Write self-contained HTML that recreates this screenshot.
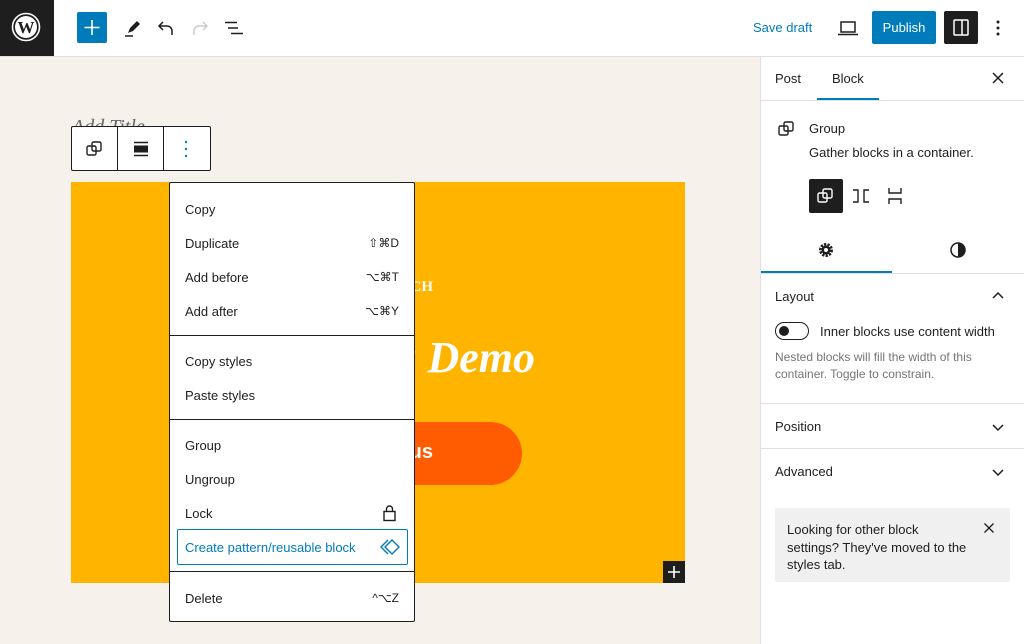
<!DOCTYPE html>
<html><head><meta charset="utf-8"><style>
*{box-sizing:border-box;margin:0;padding:0}
body{width:1024px;height:644px;overflow:hidden;font-family:"Liberation Sans",sans-serif;font-size:13px;color:#1e1e1e;background:#f6f1eb;position:relative}
.a{position:absolute}
svg{display:block}
.mi{position:absolute;left:15px;font-size:13px;color:#1e1e1e}
.sc{position:absolute;right:15px;font-size:12px;color:#1e1e1e}
</style></head><body>
<!-- top bar -->
<div class="a" style="left:0;top:0;width:1024px;height:57px;background:#fff;border-bottom:1px solid #e0e0e0"></div>
<div class="a" style="left:0;top:0;width:54px;height:56px;background:#1e1e1e">
<svg width="54" height="56" viewBox="0 0 54 56"><circle cx="26" cy="27" r="13.5" fill="none" stroke="#fff" stroke-width="1.6"/><circle cx="26" cy="27" r="11" fill="#fff"/><text x="26" y="33" text-anchor="middle" font-family="Liberation Serif" font-weight="bold" font-size="17" fill="#1e1e1e">W</text></svg></div>
<div class="a" style="left:77px;top:12px;width:30px;height:31px;background:#007cba;border-radius:2px"><svg width="30" height="31"><path d="M15 8v15M7.5 15.5h15" stroke="#fff" stroke-width="1.6"/></svg></div>
<svg class="a" style="left:120px;top:16px" width="24" height="24"><path d="M8 17l2-5 7-7 3 3-7 7z" fill="#1e1e1e"/><path d="M5 20h8" stroke="#1e1e1e" stroke-width="1.5"/></svg>
<svg class="a" style="left:154px;top:16px" width="24" height="24"><path d="M18 19v-4a5 5 0 0 0-5-5H6M9 6l-4 4 4 4" fill="none" stroke="#1e1e1e" stroke-width="1.5"/></svg>
<svg class="a" style="left:188px;top:16px" width="24" height="24"><path d="M6 19v-4a5 5 0 0 1 5-5h7M15 6l4 4-4 4" fill="none" stroke="#ccc" stroke-width="1.5"/></svg>
<svg class="a" style="left:222px;top:16px" width="24" height="24"><path d="M3 6.5h12M6 12h10M9 17.5h12" stroke="#1e1e1e" stroke-width="1.5"/></svg>
<div class="a" style="left:753px;top:20px;color:#007cba;font-size:13px">Save draft</div>
<svg class="a" style="left:836px;top:16px" width="24" height="24"><rect x="5" y="6" width="14" height="10" fill="none" stroke="#1e1e1e" stroke-width="1.5"/><path d="M2 18.5h20" stroke="#1e1e1e" stroke-width="1.5"/></svg>
<div class="a" style="left:872px;top:11px;width:64px;height:33px;background:#007cba;color:#fff;border-radius:2px;text-align:center;line-height:33px">Publish</div>
<div class="a" style="left:944px;top:11px;width:34px;height:33px;background:#1e1e1e;border-radius:2px"><svg width="34" height="33"><rect x="10" y="9" width="14" height="15" rx="1" fill="none" stroke="#fff" stroke-width="1.5"/><path d="M18 9v15" stroke="#fff" stroke-width="1.5"/></svg></div>
<svg class="a" style="left:988px;top:16px" width="20" height="24"><circle cx="10" cy="6" r="1.5" fill="#1e1e1e"/><circle cx="10" cy="12" r="1.5" fill="#1e1e1e"/><circle cx="10" cy="18" r="1.5" fill="#1e1e1e"/></svg>

<!-- canvas -->
<div class="a" style="left:72px;top:116px;font-family:'Liberation Serif';font-style:italic;font-size:20px;color:#666">Add Title</div>
<div class="a" style="left:71px;top:182px;width:614px;height:401px;background:#ffb500"></div>
<div class="a" style="right:591px;top:279px;color:#fff;font-family:'Liberation Serif';font-weight:bold;font-size:15px;white-space:nowrap">ARCH</div>
<div class="a" style="left:330px;top:422px;width:192px;height:63px;background:#ff5b00;border-radius:32px"></div>
<div class="a" style="right:591px;top:441px;color:#fff;font-weight:bold;font-size:20px">us</div>
<div class="a" style="right:489px;top:332px;color:#fff;font-family:'Liberation Serif';font-style:italic;font-weight:bold;font-size:44px;white-space:nowrap">a Demo</div>
<div class="a" style="left:663px;top:561px;width:22px;height:22px;background:#1e1e1e"><svg width="22" height="22"><path d="M11 5v12M5 11h12" stroke="#fff" stroke-width="1.6"/></svg></div>

<!-- block toolbar -->
<div class="a" style="left:71px;top:126px;width:140px;height:45px;background:#fff;border:1px solid #1e1e1e;border-radius:2px"></div>
<div class="a" style="left:117px;top:127px;width:1px;height:43px;background:#1e1e1e"></div>
<div class="a" style="left:163px;top:127px;width:1px;height:43px;background:#1e1e1e"></div>
<svg class="a" style="left:84px;top:138px" width="22" height="22"><rect x="3" y="8" width="9" height="9" rx="1.5" fill="none" stroke="#1e1e1e" stroke-width="1.4"/><rect x="8" y="4" width="9" height="9" rx="1.5" fill="none" stroke="#1e1e1e" stroke-width="1.4"/></svg>
<svg class="a" style="left:130px;top:138px" width="22" height="22"><path d="M4 4.5h14M4 17.5h14" stroke="#1e1e1e" stroke-width="1.5"/><rect x="4" y="7.5" width="14" height="7" fill="#1e1e1e"/></svg>
<svg class="a" style="left:176px;top:138px" width="20" height="22"><circle cx="10" cy="4" r="1.2" fill="#007cba"/><circle cx="10" cy="11" r="1.2" fill="#007cba"/><circle cx="10" cy="18" r="1.2" fill="#007cba"/></svg>

<!-- menu -->
<div class="a" style="left:169px;top:182px;width:246px;height:440px;background:#fff;border:1px solid #1e1e1e;border-radius:2px">
<div class="mi" style="top:19px">Copy</div>
<div class="mi" style="top:53px">Duplicate</div><div class="sc" style="top:53px">⇧⌘D</div>
<div class="mi" style="top:87px">Add before</div><div class="sc" style="top:87px">⌥⌘T</div>
<div class="mi" style="top:121px">Add after</div><div class="sc" style="top:121px">⌥⌘Y</div>
<div class="a" style="left:0;top:152px;width:244px;height:1px;background:#1e1e1e"></div>
<div class="mi" style="top:171px">Copy styles</div>
<div class="mi" style="top:205px">Paste styles</div>
<div class="a" style="left:0;top:236px;width:244px;height:1px;background:#1e1e1e"></div>
<div class="mi" style="top:255px">Group</div>
<div class="mi" style="top:289px">Ungroup</div>
<div class="mi" style="top:323px">Lock</div>
<svg class="a" style="left:210px;top:320px" width="20" height="20"><rect x="4" y="8.5" width="11" height="9" fill="none" stroke="#1e1e1e" stroke-width="1.4"/><path d="M6.5 8.5V6a3 3 0 0 1 6 0v2.5" fill="none" stroke="#1e1e1e" stroke-width="1.4"/></svg>
<div class="a" style="left:7px;top:346px;width:231px;height:36px;border:1.5px solid #007cba;border-radius:2px"></div>
<div class="mi" style="top:357px;color:#007cba">Create pattern/reusable block</div>
<svg class="a" style="left:208px;top:354px" width="24" height="20"><path d="M14 3l7 7-7 7-7-7z" fill="none" stroke="#007cba" stroke-width="1.4"/><path d="M10 3l-7 7 7 7" fill="none" stroke="#007cba" stroke-width="1.4"/></svg>
<div class="a" style="left:0;top:388px;width:244px;height:1px;background:#1e1e1e"></div>
<div class="mi" style="top:408px">Delete</div><div class="sc" style="top:408px">^⌥Z</div>
</div>

<!-- sidebar -->
<div class="a" style="left:760px;top:57px;width:264px;height:587px;background:#fff;border-left:1px solid #e0e0e0"></div>
<div class="a" style="left:775px;top:71px;font-size:13px">Post</div>
<div class="a" style="left:832px;top:71px;font-size:13px">Block</div>
<div class="a" style="left:817px;top:98px;width:62px;height:2px;background:#007cba"></div>
<div class="a" style="left:761px;top:100px;width:263px;height:1px;background:#e0e0e0"></div>
<svg class="a" style="left:990px;top:70px" width="16" height="16"><path d="M3 3l10 10M13 3L3 13" stroke="#1e1e1e" stroke-width="1.5"/></svg>
<svg class="a" style="left:776px;top:118px" width="22" height="22"><rect x="3" y="8" width="9" height="9" rx="1.5" fill="none" stroke="#1e1e1e" stroke-width="1.4"/><rect x="8" y="4" width="9" height="9" rx="1.5" fill="none" stroke="#1e1e1e" stroke-width="1.4"/></svg>
<div class="a" style="left:809px;top:121px">Group</div>
<div class="a" style="left:809px;top:145px">Gather blocks in a container.</div>
<div class="a" style="left:809px;top:179px;width:34px;height:34px;background:#1e1e1e;border-radius:2px"><svg width="34" height="34"><rect x="9" y="14" width="9" height="9" rx="1.5" fill="none" stroke="#fff" stroke-width="1.4"/><rect x="14" y="10" width="9" height="9" rx="1.5" fill="none" stroke="#fff" stroke-width="1.4"/></svg></div>
<svg class="a" style="left:850px;top:185px" width="22" height="22"><path d="M3 5h5v12H3M19 5h-5v12h5" fill="none" stroke="#1e1e1e" stroke-width="1.4"/></svg>
<svg class="a" style="left:884px;top:185px" width="22" height="22"><path d="M5 3v5h12V3M5 19v-5h12v5" fill="none" stroke="#1e1e1e" stroke-width="1.4"/></svg>
<svg class="a" style="left:816px;top:240px" width="20" height="20"><circle cx="10" cy="10" r="5.5" fill="none" stroke="#1e1e1e" stroke-width="3" stroke-dasharray="2.2 1.2"/><circle cx="10" cy="10" r="4.5" fill="#1e1e1e"/><circle cx="10" cy="10" r="2" fill="#fff"/></svg>
<svg class="a" style="left:948px;top:240px" width="20" height="20"><circle cx="10" cy="10" r="7" fill="none" stroke="#1e1e1e" stroke-width="1.5"/><path d="M10 3a7 7 0 0 1 0 14z" fill="#1e1e1e"/></svg>
<div class="a" style="left:761px;top:271px;width:131px;height:2px;background:#007cba"></div>
<div class="a" style="left:761px;top:273px;width:263px;height:1px;background:#e0e0e0"></div>
<div class="a" style="left:775px;top:289px;font-weight:500">Layout</div>
<svg class="a" style="left:990px;top:288px" width="16" height="16"><path d="M3 10l5-5 5 5" fill="none" stroke="#1e1e1e" stroke-width="1.5"/></svg>
<div class="a" style="left:775px;top:322px;width:34px;height:18px;border:1px solid #1e1e1e;border-radius:9px"><div class="a" style="left:3px;top:3px;width:10px;height:10px;border-radius:50%;background:#1e1e1e"></div></div>
<div class="a" style="left:820px;top:324px">Inner blocks use content width</div>
<div class="a" style="left:775px;top:349px;font-size:12px;color:#757575;line-height:17px">Nested blocks will fill the width of this<br>container. Toggle to constrain.</div>
<div class="a" style="left:761px;top:403px;width:263px;height:1px;background:#e0e0e0"></div>
<div class="a" style="left:775px;top:419px">Position</div>
<svg class="a" style="left:990px;top:419px" width="16" height="16"><path d="M3 6l5 5 5-5" fill="none" stroke="#1e1e1e" stroke-width="1.5"/></svg>
<div class="a" style="left:761px;top:448px;width:263px;height:1px;background:#e0e0e0"></div>
<div class="a" style="left:775px;top:464px">Advanced</div>
<svg class="a" style="left:990px;top:464px" width="16" height="16"><path d="M3 6l5 5 5-5" fill="none" stroke="#1e1e1e" stroke-width="1.5"/></svg>
<div class="a" style="left:775px;top:508px;width:235px;height:74px;background:#f0f0f0;border-radius:2px"></div>
<div class="a" style="left:787px;top:521px;line-height:17.5px">Looking for other block<br>settings? They've moved to the<br>styles tab.</div>
<svg class="a" style="left:981px;top:520px" width="16" height="16"><path d="M3.5 3.5l9 9M12.5 3.5l-9 9" stroke="#1e1e1e" stroke-width="1.3"/></svg>
</body></html>
